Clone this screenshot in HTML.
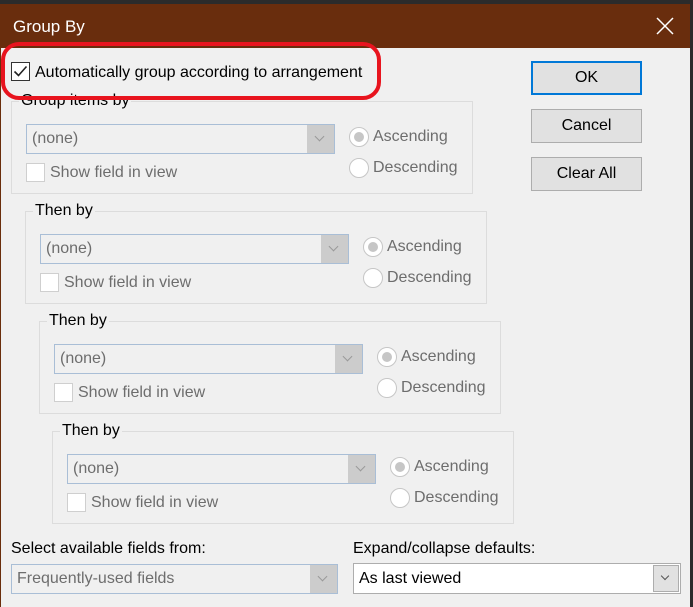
<!DOCTYPE html>
<html><head><style>
*{box-sizing:border-box;margin:0;padding:0}
body{width:693px;height:607px;overflow:hidden;background:#2b2b2b;font-family:"Liberation Sans",sans-serif;font-size:16px;position:relative}
.a{position:absolute}
#win{left:0;top:4px;width:690px;height:603px;background:#f0f0f0;border-left:1px solid #6a2e0c}
#tb{left:0;top:4px;width:690px;height:44px;background:#692d0d;color:#fff;font-size:17px;padding:13px 0 0 13px}
.grp{position:absolute;border:1px solid #dcdcdc;width:462px;height:93px}
.lg{position:absolute;left:7px;top:-10px;background:#f0f0f0;padding:0 2px;color:#000;line-height:18px}
.cb{position:absolute;left:14px;top:22px;width:309px;height:30px;border:1px solid #a9bed6;background:#f0f0f0;color:#6d6d6d;padding:5px 0 0 5px}
.ar{position:absolute;right:0;top:0;width:27px;height:28px;background:#cccccc}
.ar:after{content:"";position:absolute;left:9px;top:8px;width:6px;height:6px;border-right:1px solid #999;border-bottom:1px solid #999;transform:rotate(45deg)}
.rd{position:absolute;width:20px;height:20px;border-radius:50%;border:1px solid #c6c6c6;background:#fff}
.rd.on:after{content:"";position:absolute;left:4px;top:4px;width:10px;height:10px;border-radius:50%;background:#c6c6c6}
.rt{position:absolute;color:#6d6d6d;line-height:18px}
.ck{position:absolute;left:14px;top:61px;width:19px;height:19px;border:1px solid #cfcfcf;background:#fff}
.st{position:absolute;left:38px;top:62px;color:#6d6d6d;line-height:18px}
.btn{position:absolute;left:531px;width:111px;height:34px;border:1px solid #adadad;background:#e1e1e1;text-align:center;line-height:32px;color:#000}
</style></head><body>
<div class="a" id="win"></div>
<div class="a" id="tb">Group By</div>
<svg class="a" style="left:656px;top:17px" width="18" height="18"><path d="M1 1L17 17M17 1L1 17" stroke="#fff" stroke-width="1.5"/></svg>

<div class="a" style="left:11px;top:62px;width:19px;height:19px;border:1px solid #333;background:#fff"></div>
<svg class="a" style="left:11px;top:62px" width="19" height="19"><path d="M3.5 9.5 L7.5 13.5 L15.5 4.5" stroke="#222" stroke-width="1.6" fill="none"/></svg>
<div class="a" style="left:35px;top:64px;line-height:18px">Automatically group according to arrangement</div>

<div class="grp" style="left:11px;top:101px"><div class="lg">Group items by</div><div class="cb">(none)<div class="ar"></div></div>
<div class="rd on" style="left:337px;top:25px"></div><div class="rt" style="left:361px;top:26px">Ascending</div>
<div class="rd" style="left:337px;top:56px"></div><div class="rt" style="left:361px;top:57px">Descending</div>
<div class="ck"></div><div class="st">Show field in view</div></div>

<div class="grp" style="left:25px;top:211px"><div class="lg">Then by</div><div class="cb">(none)<div class="ar"></div></div>
<div class="rd on" style="left:337px;top:25px"></div><div class="rt" style="left:361px;top:26px">Ascending</div>
<div class="rd" style="left:337px;top:56px"></div><div class="rt" style="left:361px;top:57px">Descending</div>
<div class="ck"></div><div class="st">Show field in view</div></div>

<div class="grp" style="left:39px;top:321px"><div class="lg">Then by</div><div class="cb">(none)<div class="ar"></div></div>
<div class="rd on" style="left:337px;top:25px"></div><div class="rt" style="left:361px;top:26px">Ascending</div>
<div class="rd" style="left:337px;top:56px"></div><div class="rt" style="left:361px;top:57px">Descending</div>
<div class="ck"></div><div class="st">Show field in view</div></div>

<div class="grp" style="left:52px;top:431px"><div class="lg">Then by</div><div class="cb">(none)<div class="ar"></div></div>
<div class="rd on" style="left:337px;top:25px"></div><div class="rt" style="left:361px;top:26px">Ascending</div>
<div class="rd" style="left:337px;top:56px"></div><div class="rt" style="left:361px;top:57px">Descending</div>
<div class="ck"></div><div class="st">Show field in view</div></div>

<svg class="a" style="left:0;top:40px" width="384" height="62"><rect x="3" y="4" width="376" height="54" rx="16" ry="16" fill="none" stroke="#e8141e" stroke-width="4"/></svg>

<div class="btn" style="top:61px;border:2px solid #0078d7;line-height:30px">OK</div>
<div class="btn" style="top:109px">Cancel</div>
<div class="btn" style="top:157px">Clear All</div>

<div class="a" style="left:11px;top:540px;line-height:18px">Select available fields from:</div>
<div class="cb" style="left:11px;top:564px;width:327px;padding-top:5px">Frequently-used fields<div class="ar"></div></div>
<div class="a" style="left:353px;top:540px;line-height:18px">Expand/collapse defaults:</div>
<div class="a" style="left:353px;top:563px;width:328px;height:31px;border:1px solid #adadad;background:#fff;padding:6px 0 0 5px">As last viewed
<div style="position:absolute;right:1px;top:1px;width:26px;height:27px;background:#e1e1e1;border:1px solid #adadad"><div style="position:absolute;left:8px;top:7px;width:6px;height:6px;border-right:1px solid #555;border-bottom:1px solid #555;transform:rotate(45deg)"></div></div></div>
</body></html>
